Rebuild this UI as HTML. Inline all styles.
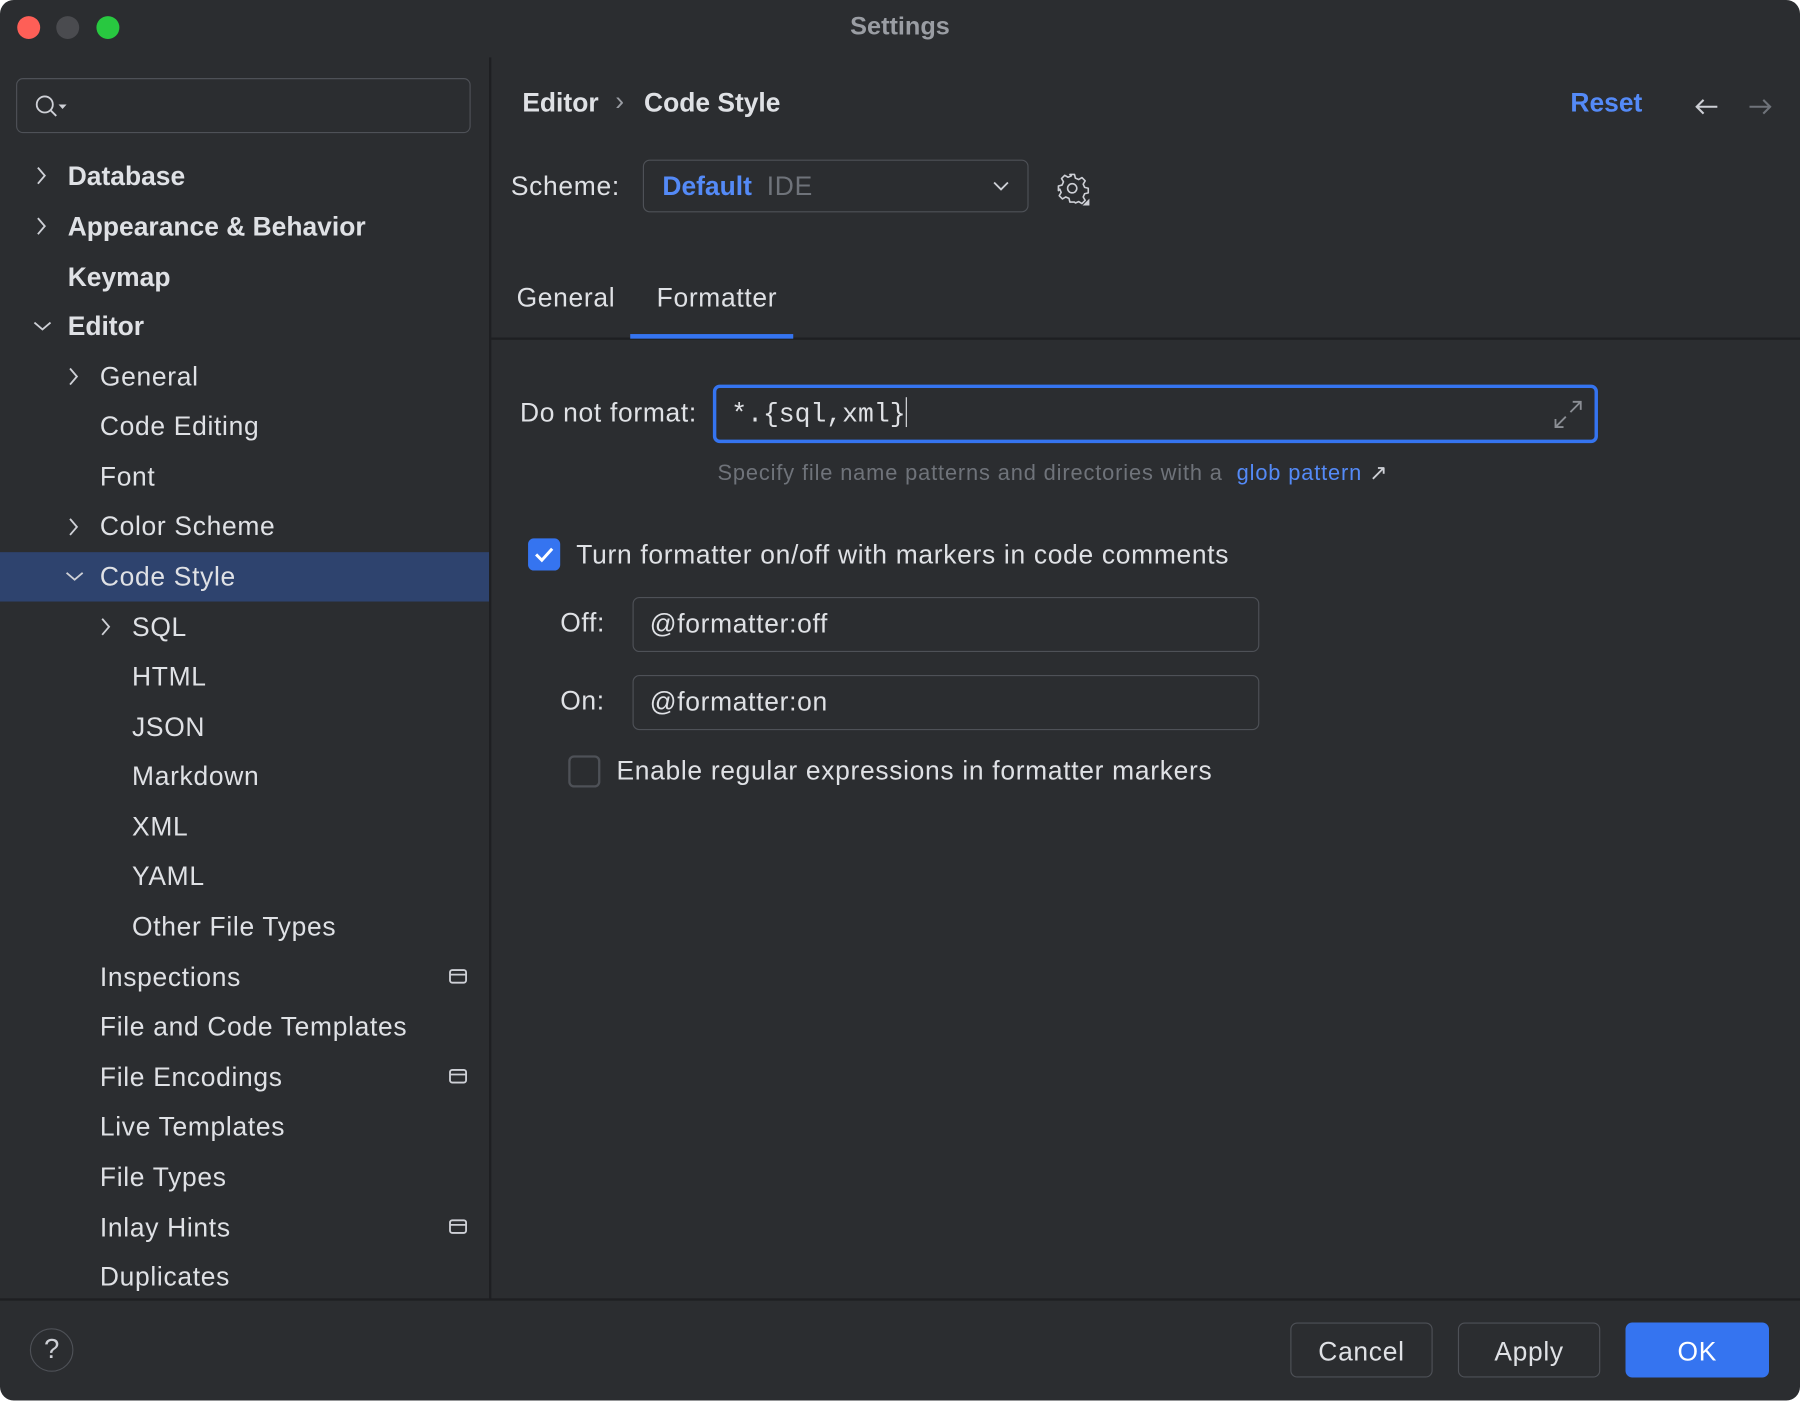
<!DOCTYPE html>
<html><head><meta charset="utf-8"><style>
html,body{margin:0;padding:0;background:#fff;width:1800px;height:1400px;overflow:hidden}
#w{position:absolute;left:0;top:0;width:1568px;height:1220px;transform:scale(1.14796);transform-origin:0 0;background:#2b2d30;border-radius:12px;font-family:"Liberation Sans",sans-serif;color:#dfe1e5;overflow:hidden}
.a{position:absolute;white-space:nowrap}
.t{font-size:23px;line-height:28px;letter-spacing:0.6px}
.b{font-weight:bold;letter-spacing:0}
.dot{position:absolute;width:20px;height:20px;border-radius:50%;top:14px}
.box{position:absolute;border:1.5px solid #4e5157;border-radius:6px;box-sizing:border-box}
</style></head><body><div id="w">
<div class="dot" style="left:15px;background:#fe5f57"></div>
<div class="dot" style="left:49px;background:#4a4b4f"></div>
<div class="dot" style="left:84px;background:#28c840"></div>
<div class="a b" style="left:0;width:1568px;text-align:center;top:10px;font-size:22px;color:#9a9da3">Settings</div>

<div class="a" style="left:426px;top:50px;width:2px;height:1082px;background:#1e1f22"></div>
<div class="box" style="left:14px;top:68px;width:396px;height:48px"></div>
<svg class="a" style="left:28px;top:80px" width="34" height="24" viewBox="0 0 34 24"><circle cx="11" cy="11" r="7" fill="none" stroke="#ced0d6" stroke-width="1.6"/><path d="M16 16l5 5" stroke="#ced0d6" stroke-width="1.6"/><path d="M23 11h7l-3.5 4z" fill="#ced0d6"/></svg>

<div class="a" style="left:0;top:481px;width:426px;height:43px;background:#2e436e"></div>

<svg class="a" style="left:0;top:0" width="426" height="1130">
<g fill="none" stroke="#ced0d6" stroke-width="1.6">
<path d="M33 146l6 7-6 7M33 190l6 7-6 7M30 281l7 6 7-6M61 321l6 7-6 7M61 452l6 7-6 7M58 499l7 6 7-6M89 539l6 7-6 7"/>
<rect x="392" y="845" width="14" height="11" rx="2"/><path d="M392 849h14"/>
<rect x="392" y="932" width="14" height="11" rx="2"/><path d="M392 936h14"/>
<rect x="392" y="1063" width="14" height="11" rx="2"/><path d="M392 1067h14"/>
</g></svg>
<div class="a t b" style="left:59px;top:139px">Database</div>
<div class="a t b" style="left:59px;top:183px">Appearance &amp; Behavior</div>
<div class="a t b" style="left:59px;top:227px">Keymap</div>
<div class="a t b" style="left:59px;top:270px">Editor</div>
<div class="a t" style="left:87px;top:314px">General</div>
<div class="a t" style="left:87px;top:357px">Code Editing</div>
<div class="a t" style="left:87px;top:401px">Font</div>
<div class="a t" style="left:87px;top:444px">Color Scheme</div>
<div class="a t" style="left:87px;top:488px">Code Style</div>
<div class="a t" style="left:115px;top:532px">SQL</div>
<div class="a t" style="left:115px;top:575px">HTML</div>
<div class="a t" style="left:115px;top:619px">JSON</div>
<div class="a t" style="left:115px;top:662px">Markdown</div>
<div class="a t" style="left:115px;top:706px">XML</div>
<div class="a t" style="left:115px;top:749px">YAML</div>
<div class="a t" style="left:115px;top:793px">Other File Types</div>
<div class="a t" style="left:87px;top:837px">Inspections</div>
<div class="a t" style="left:87px;top:880px">File and Code Templates</div>
<div class="a t" style="left:87px;top:924px">File Encodings</div>
<div class="a t" style="left:87px;top:967px">Live Templates</div>
<div class="a t" style="left:87px;top:1011px">File Types</div>
<div class="a t" style="left:87px;top:1055px">Inlay Hints</div>
<div class="a t" style="left:87px;top:1098px">Duplicates</div>

<div class="a t b" style="left:455px;top:75px">Editor</div>
<div class="a t" style="left:536px;top:74px;color:#9a9da3">›</div>
<div class="a t b" style="left:561px;top:75px">Code Style</div>
<div class="a t b" style="left:1368px;top:75px;color:#548af7">Reset</div>
<svg class="a" style="left:1474px;top:82px" width="72" height="22"><g fill="none" stroke-width="1.8"><path d="M4 11h18M10 5l-6 6 6 6" stroke="#ced0d6"/><path d="M50 11h18M62 5l6 6-6 6" stroke="#6f737a"/></g></svg>

<div class="a t" style="left:445px;top:148px">Scheme:</div>
<div class="box" style="left:560px;top:139px;width:336px;height:46px"></div>
<div class="a t" style="left:577px;top:148px"><b style="color:#548af7;letter-spacing:0">Default</b> <span style="color:#6f737a;margin-left:6px">IDE</span></div>
<svg class="a" style="left:864px;top:155px" width="16" height="14"><path d="M2 4l6 6 6-6" fill="none" stroke="#ced0d6" stroke-width="1.6"/></svg>
<svg class="a" style="left:918px;top:148px" width="32" height="32" viewBox="0 0 32 32"><g fill="none" stroke="#ced0d6" stroke-width="1.4" stroke-linejoin="round"><path d="M14 4h4l.8 3.2 2.8 1.2 2.9-1.7 2.8 2.8-1.7 2.9 1.2 2.8 3.2.8v4l-3.2.8-1.2 2.8 1.7 2.9-2.8 2.8-2.9-1.7-2.8 1.2L18 28h-4l-.8-3.2-2.8-1.2-2.9 1.7-2.8-2.8 1.7-2.9-1.2-2.8L4 18v-4l3.2-.8 1.2-2.8-1.7-2.9 2.8-2.8 2.9 1.7 2.8-1.2z"/><circle cx="16" cy="16" r="4"/></g><path d="M31 25v6h-6z" fill="#ced0d6"/></svg>

<div class="a t" style="left:450px;top:245px">General</div>
<div class="a t" style="left:572px;top:245px">Formatter</div>
<div class="a" style="left:428px;top:294px;width:1140px;height:2px;background:#1e1f22"></div>
<div class="a" style="left:549px;top:291px;width:142px;height:4px;background:#3574f0"></div>

<div class="a t" style="left:453px;top:345px">Do not format:</div>
<div class="a" style="left:621px;top:335px;width:771px;height:51px;border:3px solid #3574f0;border-radius:6px;box-sizing:border-box"></div>
<div class="a" style="left:637px;top:346px;font-family:'Liberation Mono',monospace;font-size:23px;line-height:28px">*.{sql,xml}<span style="display:inline-block;width:1.5px;height:26px;background:#dfe1e5;vertical-align:-5px"></span></div>
<svg class="a" style="left:1352px;top:347px" width="28" height="28"><g fill="none" stroke="#8b8e94" stroke-width="1.6"><path d="M16 12l9-9M18 3h7v7M12 16l-9 9M3 18v7h7"/></g></svg>
<div class="a" style="left:625px;top:402px;font-size:19px;line-height:22px;color:#6f737a;letter-spacing:0.75px">Specify file name patterns and directories with a &nbsp;<span style="color:#548af7">glob pattern</span> <span style="color:#ced0d6">↗</span></div>

<div class="a" style="left:460px;top:469px;width:28px;height:28px;border-radius:5px;background:#3574f0"></div>
<svg class="a" style="left:460px;top:469px" width="28" height="28"><path d="M7 14l5 5 9-10" fill="none" stroke="#fff" stroke-width="2.6"/></svg>
<div class="a t" style="left:502px;top:469px">Turn formatter on/off with markers in code comments</div>

<div class="a t" style="left:488px;top:528px">Off:</div>
<div class="box" style="left:551px;top:520px;width:546px;height:48px"></div>
<div class="a t" style="left:566px;top:529px">@formatter:off</div>
<div class="a t" style="left:488px;top:596px">On:</div>
<div class="box" style="left:551px;top:588px;width:546px;height:48px"></div>
<div class="a t" style="left:566px;top:597px">@formatter:on</div>

<div class="box" style="left:495px;top:658px;width:28px;height:28px;border-radius:5px;border-width:2px"></div>
<div class="a t" style="left:537px;top:657px">Enable regular expressions in formatter markers</div>

<div class="a" style="left:0;top:1131px;width:1568px;height:2px;background:#1e1f22"></div>
<div class="a" style="left:26px;top:1157px;width:38px;height:38px;border:1.5px solid #4e5157;border-radius:50%;box-sizing:border-box;text-align:center;font-size:24px;line-height:35px;color:#ced0d6">?</div>
<div class="box" style="left:1124px;top:1152px;width:124px;height:48px"></div>
<div class="a t" style="left:1124px;width:124px;text-align:center;top:1163px">Cancel</div>
<div class="box" style="left:1270px;top:1152px;width:124px;height:48px"></div>
<div class="a t" style="left:1270px;width:124px;text-align:center;top:1163px">Apply</div>
<div class="a" style="left:1416px;top:1152px;width:125px;height:48px;background:#3574f0;border-radius:6px"></div>
<div class="a t" style="left:1416px;width:125px;text-align:center;top:1163px;color:#fff">OK</div>
</div></body></html>
